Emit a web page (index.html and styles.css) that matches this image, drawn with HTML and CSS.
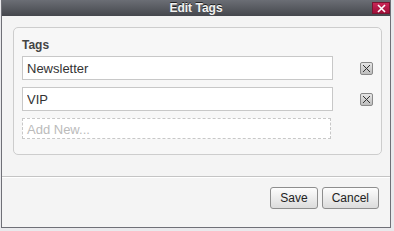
FILE: index.html
```html
<!DOCTYPE html>
<html lang="en">
<head>
  <meta charset="UTF-8">
  <title>Edit Tags</title>
  <link rel="stylesheet" href="styles.css">
</head>
<body>
  <div class="dialog">
    <div class="titlebar">
      <span class="title">Edit Tags</span>
      <button class="close-btn" aria-label="Close">
        <svg width="9" height="9" viewBox="0 0 9 9"><path d="M1 1 L8 8 M8 1 L1 8" stroke="#fff" stroke-width="1.6"/></svg>
      </button>
    </div>

    <div class="content">
      <div class="tags-box">
        <div class="tags-label">Tags</div>
        <div class="tag-row">
          <input class="tag-input" type="text" value="Newsletter">
          <span class="remove"><svg width="9" height="9" viewBox="0 0 9 9"><path d="M1 1 L8 8 M8 1 L1 8" stroke="#333" stroke-width="1"/></svg></span>
        </div>
        <div class="tag-row">
          <input class="tag-input" type="text" value="VIP">
          <span class="remove"><svg width="9" height="9" viewBox="0 0 9 9"><path d="M1 1 L8 8 M8 1 L1 8" stroke="#333" stroke-width="1"/></svg></span>
        </div>
        <div class="tag-row">
          <div class="add-new">Add New...</div>
        </div>
      </div>
    </div>

    <div class="footer">
      <button class="btn">Save</button>
      <button class="btn">Cancel</button>
    </div>
  </div>
</body>
</html>
```

FILE: styles.css
```css
body {
  margin: 0;
  background: #e9e9ec;
  font-family: 'Liberation Sans', Arial, sans-serif;
  font-size: 12px;
  color: #333;
}

.dialog {
  width: 388px;
  height: 227px;
  margin-left: 1px;
  background: #f4f4f4;
  border: 1px solid #6f7077;
  border-top: none;
  display: flex;
  flex-direction: column;
}

.titlebar {
  height: 16px;
  background: linear-gradient(#6b6e75, #45474d);
  display: flex;
  align-items: center;
  justify-content: center;
  position: relative;
}

.title {
  color: #f2f2f2;
  font-size: 12px;
  font-weight: bold;
  text-shadow: 0 -1px 0 #222;
}

.close-btn {
  position: absolute;
  right: 0;
  top: 2px;
  width: 18px;
  height: 12px;
  padding: 0;
  border: 1px solid #7a1430;
  background: linear-gradient(#c82656, #a20f3a);
  display: flex;
  align-items: center;
  justify-content: center;
}

.content {
  padding: 11px 8px 0 11px;
  height: 149px;
  border-bottom: 1px solid #c4c4c4;
  box-shadow: 0 1px 0 #fff;
}

.tags-box {
  height: 116px;
  border: 1px solid #cdcdcd;
  border-radius: 5px;
  background: #f7f7f7;
  padding: 10px 8px 0 8px;
}

.tags-label {
  font-weight: bold;
  font-size: 12px;
  color: #444;
  margin-bottom: 4px;
}

.tag-row {
  display: flex;
  align-items: center;
  margin-bottom: 7px;
}

.tag-input {
  width: 312px;
  height: 24px;
  box-sizing: border-box;
  border: 1px solid #c8c8c8;
  background: #fff;
  font-family: 'Liberation Sans', Arial, sans-serif;
  font-size: 13px;
  color: #333;
  padding: 0 4px;
  margin: 0;
}

.remove {
  margin-left: 27px;
  width: 11px;
  height: 11px;
  border: 1px solid #8a8a8a;
  border-radius: 2px;
  background: linear-gradient(#e6e6e6, #bdbdbd);
  display: flex;
  align-items: center;
  justify-content: center;
}

.add-new {
  width: 309px;
  height: 21px;
  box-sizing: border-box;
  border: 1px dashed #c8c8c8;
  background: #fff;
  color: #bbb;
  padding: 3px 4px;
  font-size: 13px;
}

.footer {
  flex: 1;
  display: flex;
  justify-content: flex-end;
  align-items: flex-start;
  padding: 10px 11px 0 0;
  gap: 4px;
}

.btn {
  height: 22px;
  padding: 0 9px;
  font-family: 'Liberation Sans', Arial, sans-serif;
  font-size: 12px;
  color: #222;
  border: 1px solid #8e8e8e;
  border-radius: 3px;
  background: linear-gradient(#fdfdfd, #dcdcdc);
}
```
